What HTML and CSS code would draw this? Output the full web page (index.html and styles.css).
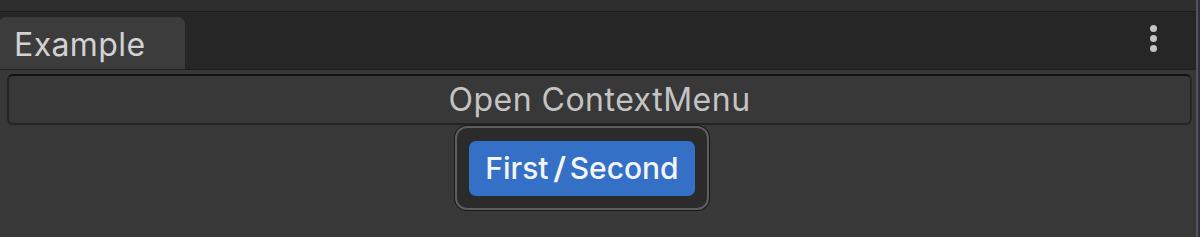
FILE: index.html
```html
<!DOCTYPE html>
<html lang="en">
<head>
  <meta charset="UTF-8">
  <title>Example</title>
  <link rel="stylesheet" href="styles.css">
</head>
<body>
  <div class="ventana">
    <div class="franja"></div>
    <div class="pestanas">
      <div class="pestana">Example</div>
      <div class="menu-puntos">
        <span></span><span></span><span></span>
      </div>
    </div>
    <div class="contenido">
      <div class="boton">Open ContextMenu</div>
      <div class="contexto">
        <div class="opcion">First<span class="barra">/</span>Second</div>
      </div>
    </div>
  </div>
</body>
</html>
```

FILE: styles.css
```css
body {
  margin: 0;
  padding: 0;
  background-color: #2c3040;
  font-family: Inter, "Noto Sans", sans-serif;
}

.ventana {
  width: 1196px;
  height: 237px;
  display: flex;
  flex-direction: column;
  background-color: #383838;
  border-right: 2px solid #555;
  overflow: hidden;
}

.franja {
  height: 11px;
  background-color: #2e2e2e;
  border-bottom: 1px solid #1c1c1c;
}

.pestanas {
  height: 57px;
  display: flex;
  align-items: flex-end;
  justify-content: space-between;
  background-color: #262626;
  border-bottom: 1px solid #1f1f1f;
}

.pestana {
  flex: none;
  width: 186px;
  height: 52px;
  padding-left: 15px;
  padding-top: 2px;
  margin-left: -1px;
  display: flex;
  align-items: center;
  box-sizing: border-box;
  background-color: #3c3c3c;
  border-top-right-radius: 7px;
  border-top-left-radius: 7px;
  color: #d2d2d2;
  font-size: 32px;
  letter-spacing: 0.4px;
}

.menu-puntos {
  align-self: flex-start;
  display: flex;
  flex-direction: column;
  gap: 3px;
  margin-top: 13px;
  margin-right: 39px;
}

.menu-puntos span {
  width: 7px;
  height: 7px;
  border-radius: 50%;
  background-color: #c4c4c4;
}

.contenido {
  flex: 1;
  position: relative;
  padding: 4px 4px 0 7px;
}

.boton {
  height: 47px;
  display: flex;
  align-items: center;
  justify-content: center;
  background-color: #383838;
  border: 2px solid #242424;
  border-top-color: #111;
  border-radius: 6px;
  color: #c4c4c4;
  font-size: 32px;
  letter-spacing: 0.5px;
}

.contexto {
  position: absolute;
  left: 455px;
  top: 56px;
  width: 250px;
  height: 80px;
  display: flex;
  align-items: center;
  justify-content: center;
  background-color: #2b2b2b;
  border: 2px solid #5e5e5e;
  border-radius: 12px;
  box-shadow: 0 0 0 1px #1a1a1a;
}

.opcion {
  width: 226px;
  height: 55px;
  display: flex;
  align-items: center;
  justify-content: center;
  background-color: #3370c6;
  border-radius: 7px;
  color: #f4f4f4;
  font-size: 30px;
  font-weight: 500;
}

.barra {
  margin: 0 5px;
  transform: scaleX(1.2);
}
```
